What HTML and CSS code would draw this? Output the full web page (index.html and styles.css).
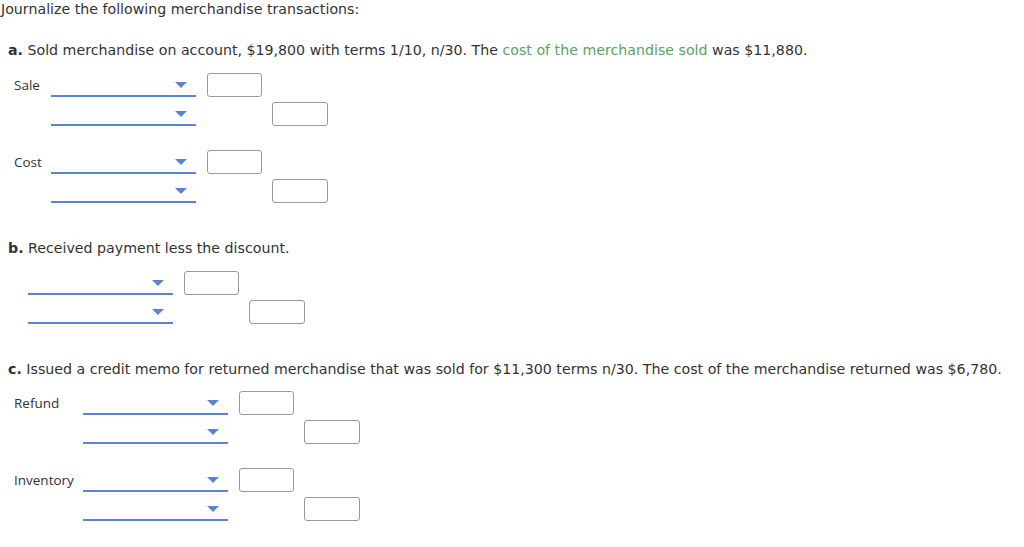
FILE: index.html
```html
<!DOCTYPE html>
<html lang="en">
<head>
    <meta charset="UTF-8">
    <meta name="viewport" content="width=device-width, initial-scale=1.0">
    <title>Journalize Transactions</title>
    <link rel="stylesheet" href="styles.css">
</head>
<body>
    <p class="intro">Journalize the following merchandise transactions:</p>

    <div class="part">
        <p class="question"><b>a.</b> Sold merchandise on account, $19,800 with terms 1/10, n/30. The <span class="term">cost of the merchandise sold</span> was $11,880.</p>
        <div class="entries label-short">
            <div class="entry">
                <span class="label">Sale</span>
                <div class="select"></div>
                <div class="amount debit"></div>
                <span></span>
                <span></span>
                <div class="select"></div>
                <span></span>
                <div class="amount credit"></div>
            </div>
            <div class="entry">
                <span class="label">Cost</span>
                <div class="select"></div>
                <div class="amount debit"></div>
                <span></span>
                <span></span>
                <div class="select"></div>
                <span></span>
                <div class="amount credit"></div>
            </div>
        </div>
    </div>

    <div class="part">
        <p class="question"><b>b.</b> Received payment less the discount.</p>
        <div class="entries label-none">
            <div class="entry">
                <span class="label"></span>
                <div class="select"></div>
                <div class="amount debit"></div>
                <span></span>
                <span></span>
                <div class="select"></div>
                <span></span>
                <div class="amount credit"></div>
            </div>
        </div>
    </div>

    <div class="part">
        <p class="question"><b>c.</b> Issued a credit memo for returned merchandise that was sold for $11,300 terms n/30. The cost of the merchandise returned was $6,780.</p>
        <div class="entries label-long">
            <div class="entry">
                <span class="label">Refund</span>
                <div class="select"></div>
                <div class="amount debit"></div>
                <span></span>
                <span></span>
                <div class="select"></div>
                <span></span>
                <div class="amount credit"></div>
            </div>
            <div class="entry">
                <span class="label">Inventory</span>
                <div class="select"></div>
                <div class="amount debit"></div>
                <span></span>
                <span></span>
                <div class="select"></div>
                <span></span>
                <div class="amount credit"></div>
            </div>
        </div>
    </div>
</body>
</html>
```

FILE: styles.css
```css
body {
    margin: 0;
    font-family: "DejaVu Sans", Verdana, sans-serif;
    font-size: 14.2px;
    color: #333;
    background-color: #fff;
}

.intro {
    margin: 0;
    padding-left: 1px;
    line-height: 18px;
}

.part {
    margin-top: 22px;
}

.part + .part {
    margin-top: 35px;
}

.question {
    margin: 0;
    padding-left: 8px;
    line-height: 20px;
}

.term {
    color: #5aa464;
}

.entries {
    display: flex;
    flex-direction: column;
    gap: 24px;
    margin-top: 13px;
    padding-left: 14px;
}

.label-long {
    margin-top: 12px;
}

.entry {
    display: grid;
    grid-template-columns: var(--label-width) 145px 56px 56px;
    grid-auto-rows: 24px;
    column-gap: 10px;
    row-gap: 5px;
}

.label-short { --label-width: 27px; }
.label-none { --label-width: 4px; }
.label-long { --label-width: 59px; }

.label {
    align-self: center;
    font-family: "Open Sans", "Liberation Sans", sans-serif;
    font-size: 13.5px;
    color: #333;
    white-space: nowrap;
}

.select {
    position: relative;
    border-bottom: 2px solid #5a84d1;
}

.select::after {
    content: "";
    position: absolute;
    right: 9px;
    top: 9px;
    border-left: 6px solid transparent;
    border-right: 6px solid transparent;
    border-top: 6px solid #5a84d1;
}

.amount {
    box-sizing: border-box;
    border: 1px solid #9a9a9a;
    border-radius: 3px;
    background-color: #fff;
}

.debit {
    margin-left: 1px;
}
```
